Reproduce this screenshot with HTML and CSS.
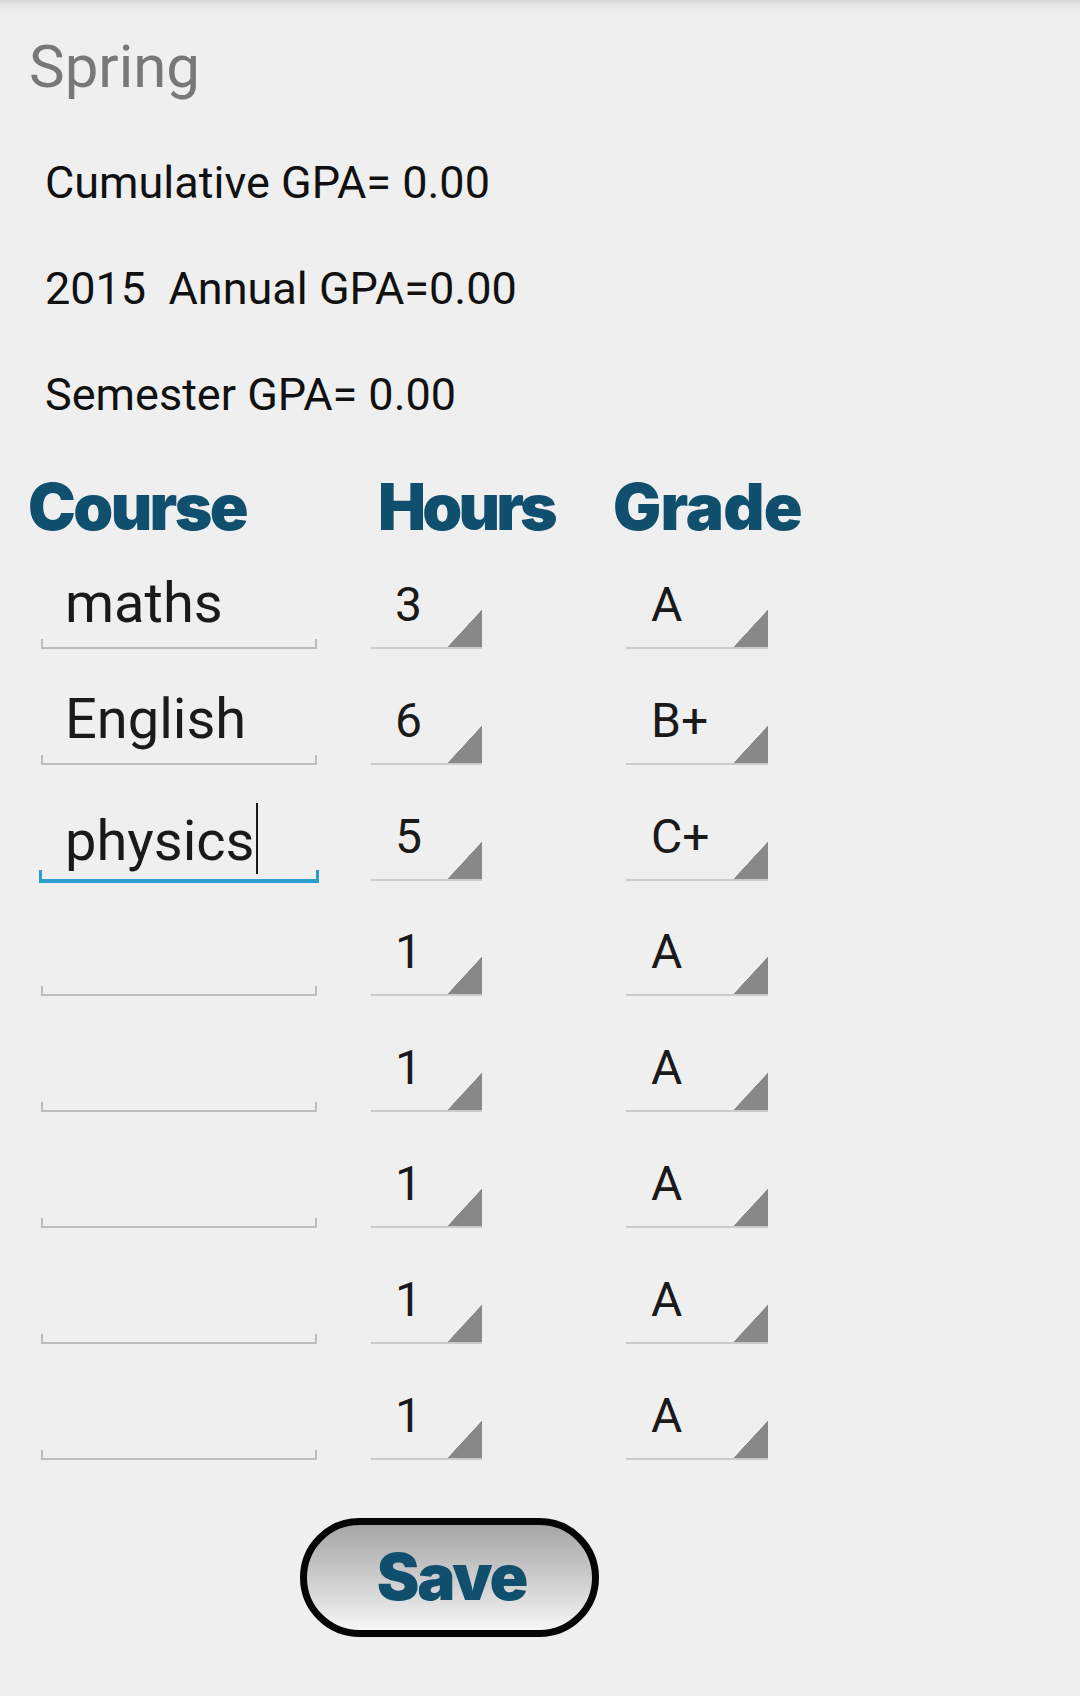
FILE: index.html
```html
<!DOCTYPE html>
<html lang="en">
<head>
<meta charset="utf-8">
<title>GPA - Spring</title>
<link rel="stylesheet" href="styles.css">
</head>
<body>
<main class="page">
  <h1 class="season">Spring</h1>
  <section class="stats">
    <p class="stat">Cumulative GPA= 0.00</p>
    <p class="stat">2015&nbsp; Annual GPA=0.00</p>
    <p class="stat">Semester GPA= 0.00</p>
  </section>

  <section class="table">
    <div class="thead">
      <span class="th th-course">Course</span>
      <span class="th th-hours">Hours</span>
      <span class="th th-grade">Grade</span>
    </div>

    <div class="row">
      <div class="field">maths</div>
      <div class="spin spin-hours">3</div>
      <div class="spin spin-grade">A</div>
    </div>
    <div class="row">
      <div class="field">English</div>
      <div class="spin spin-hours">6</div>
      <div class="spin spin-grade">B+</div>
    </div>
    <div class="row">
      <div class="field field-focus">physics<span class="caret"></span></div>
      <div class="spin spin-hours">5</div>
      <div class="spin spin-grade">C+</div>
    </div>
    <div class="row">
      <div class="field"></div>
      <div class="spin spin-hours">1</div>
      <div class="spin spin-grade">A</div>
    </div>
    <div class="row">
      <div class="field"></div>
      <div class="spin spin-hours">1</div>
      <div class="spin spin-grade">A</div>
    </div>
    <div class="row">
      <div class="field"></div>
      <div class="spin spin-hours">1</div>
      <div class="spin spin-grade">A</div>
    </div>
    <div class="row">
      <div class="field"></div>
      <div class="spin spin-hours">1</div>
      <div class="spin spin-grade">A</div>
    </div>
    <div class="row">
      <div class="field"></div>
      <div class="spin spin-hours">1</div>
      <div class="spin spin-grade">A</div>
    </div>
  </section>

  <div class="actions">
    <button class="save" type="button">Save</button>
  </div>
</main>
</body>
</html>
```

FILE: styles.css
```css
html, body {
  margin: 0;
  padding: 0;
}

body {
  width: 1080px;
  min-height: 1696px;
  background: linear-gradient(#d6d6d6, #e8e8e8 6px, #efefef 16px) no-repeat top left / 100% 16px, #efefef;
  font-family: "Roboto", "Liberation Sans", sans-serif;
  color: #141414;
}

.page {
  padding-top: 32px;
}

.season {
  margin: 0;
  padding-left: 29px;
  font-size: 60px;
  line-height: 70px;
  font-weight: 400;
  color: #787878;
}

.stats {
  margin-top: 28px;
  padding-left: 45px;
}

.stat {
  margin: 0;
  font-size: 45px;
  line-height: 106px;
  color: #111;
}

.table {
  margin-top: 29px;
}

.thead {
  display: grid;
  grid-template-columns: 350px 235px auto;
  padding-left: 28px;
  height: 56px;
}

.th {
  font-family: "Inter", "Lato", "Liberation Sans", sans-serif;
  font-weight: 900;
  font-size: 64px;
  line-height: 60px;
  height: 56px;
  color: #10506e;
  letter-spacing: -2px;
}

.th-course {
  letter-spacing: -2.6px;
}

.th-hours {
  letter-spacing: -3.8px;
}

.th-grade {
  letter-spacing: -0.8px;
}

.row {
  display: grid;
  grid-template-columns: 330px 255px 142px;
  align-items: end;
  height: 115.85px;
  padding-left: 41px;
}

.field {
  box-sizing: border-box;
  width: 276px;
  padding: 0 0 12px 24px;
  font-size: 56px;
  line-height: 64px;
  height: 78px;
  color: #1a1a1a;
  border-bottom: 2px solid #bdbdbd;
  background:
    linear-gradient(#bdbdbd, #bdbdbd) left bottom / 2px 10px no-repeat,
    linear-gradient(#bdbdbd, #bdbdbd) right bottom / 2px 10px no-repeat;
  background-origin: border-box;
  white-space: nowrap;
}

.field-focus {
  width: 280px;
  height: 80px;
  margin: 0 0 -2px -2px;
  padding-left: 26px;
  border-bottom: 4px solid #2b9fcb;
  background:
    linear-gradient(#2b9fcb, #2b9fcb) left bottom / 3px 13px no-repeat,
    linear-gradient(#2b9fcb, #2b9fcb) right bottom / 3px 13px no-repeat;
  background-origin: border-box;
}

.caret {
  display: inline-block;
  width: 2px;
  height: 71px;
  margin-left: 1px;
  vertical-align: -14px;
  background: #1a1a1a;
}

.spin {
  box-sizing: border-box;
  height: 72px;
  padding-bottom: 14px;
  font-size: 48px;
  line-height: 56px;
  color: #1a1a1a;
  border-bottom: 2px solid #cbcbcb;
  background: linear-gradient(to bottom right, transparent calc(50% - 0.5px), #888 50%) right bottom / 36px 39px no-repeat;
  background-origin: border-box;
}

.spin-hours {
  width: 111px;
  padding-left: 24px;
}

.spin-grade {
  width: 142px;
  padding-left: 25px;
}

.actions {
  margin-top: 58px;
  padding-left: 300px;
}

.save {
  box-sizing: border-box;
  width: 299px;
  height: 119px;
  border: 7px solid #050505;
  border-radius: 60px;
  background: linear-gradient(#a6a6a6 0%, #c8c8c8 45%, #e9e9e9 85%, #f7f7f7 100%);
  font-family: "Inter", "Lato", "Liberation Sans", sans-serif;
  font-weight: 900;
  font-size: 64px;
  letter-spacing: -2px;
  line-height: 1;
  color: #10506e;
  padding: 0 0 0 4px;
  cursor: pointer;
}
```
